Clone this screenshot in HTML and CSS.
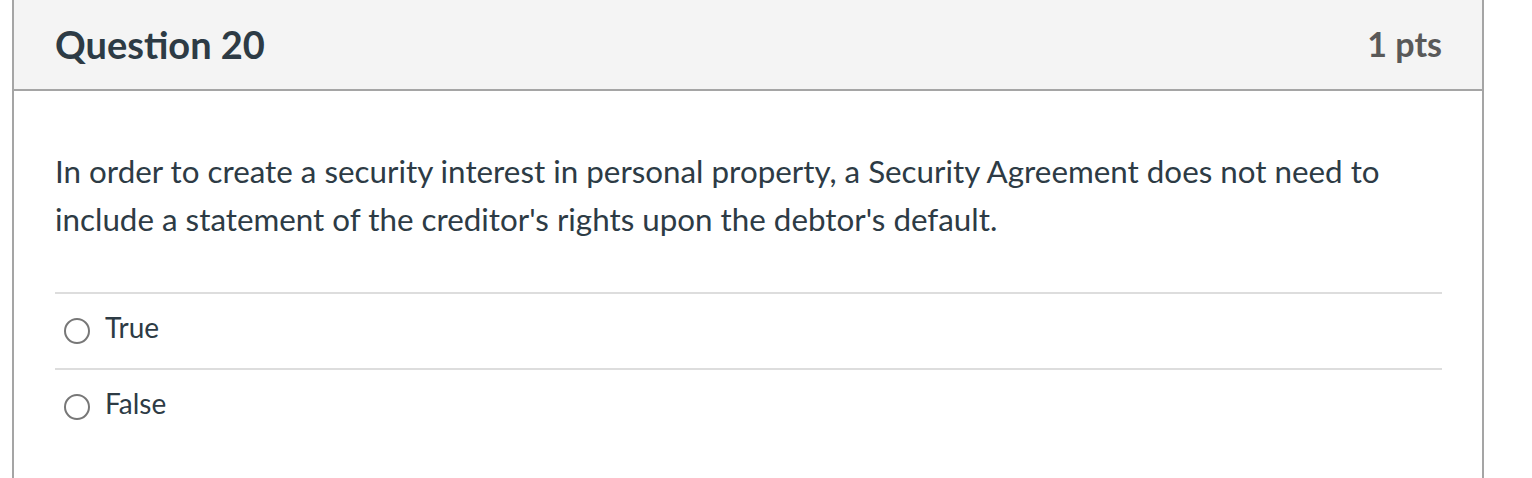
FILE: index.html
```html
<!DOCTYPE html>
<html>
<head>
<meta charset="utf-8">
<link rel="stylesheet" href="styles.css">
</head>
<body>
<div class="question">
  <div class="header">
    <h2 class="title">Question 20</h2>
    <div class="points">1 pts</div>
  </div>
  <div class="content">
    <p class="text">In order to create a security interest in personal property, a Security Agreement does not need to include a statement of the creditor's rights upon the debtor's default.</p>
    <div class="answers">
      <label class="answer"><span class="radio"></span><span class="label">True</span></label>
      <label class="answer"><span class="radio"></span><span class="label">False</span></label>
    </div>
  </div>
</div>
</body>
</html>
```
FILE: styles.css
```css
html, body {
  margin: 0;
  padding: 0;
  background: #ffffff;
}
body {
  font-family: Lato, "Noto Sans", sans-serif;
  color: #2d3b45;
  overflow: hidden;
}
.question {
  margin-left: 12px;
  width: 1468px;
  border-left: 2px solid #a5a5a5;
  border-right: 2px solid #a5a5a5;
  height: 478px;
}
.header {
  display: flex;
  justify-content: space-between;
  align-items: center;
  background: #f4f4f4;
  border-bottom: 2px solid #a5a5a5;
  padding: 0 40px 2px 41px;
  box-sizing: border-box;
  height: 91px;
}
.title {
  margin: 0;
  font-size: 38px;
  font-weight: 700;
  color: #2d3b45;
}
.points {
  font-size: 34px;
  font-weight: 700;
  color: #595959;
}
.content {
  padding: 56px 40px 0 41px;
}
.text {
  margin: 0 0 49px 0;
  font-size: 31.35px;
  line-height: 48px;
}
.answer {
  display: flex;
  align-items: center;
  gap: 15px;
  height: 76px;
  box-sizing: border-box;
  border-top: 2px solid #dddddd;
  padding-left: 9px;
  font-size: 28px;
}
.radio {
  flex-shrink: 0;
  width: 22px;
  height: 22px;
  border: 2px solid #777777;
  border-radius: 50%;
}
.label {
  margin-bottom: 8px;
}
```
